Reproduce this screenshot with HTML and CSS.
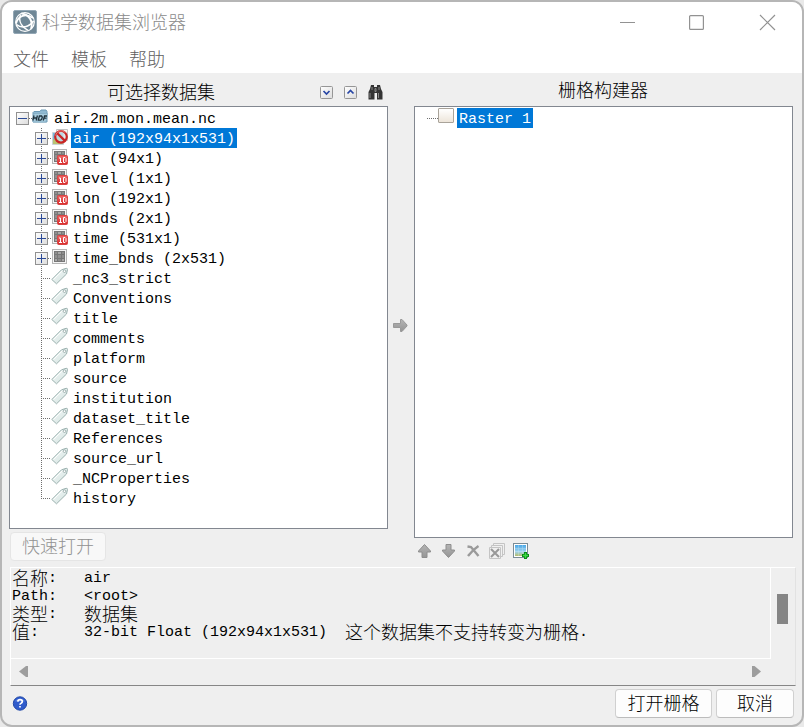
FILE: index.html
```html
<!DOCTYPE html>
<html lang="zh-CN">
<head>
  <meta charset="UTF-8" />
  <title>科学数据集浏览器</title>
  <meta name="viewport" content="width=device-width, initial-scale=1.0"/>
  <link rel="stylesheet" href="styles.css">
</head>
<body>

<!-- shared icons -->
<svg class="sprite" aria-hidden="true">
  <defs>
    <linearGradient id="gBox" x1="0" y1="0" x2="1" y2="1"><stop offset="0" stop-color="#fff"/><stop offset="1" stop-color="#dcdcdc"/></linearGradient>
    <linearGradient id="gTag" x1="0" y1="0" x2="1" y2="1"><stop offset="0" stop-color="#f8fcfb"/><stop offset="1" stop-color="#cfdfdd"/></linearGradient>
    <linearGradient id="gRed" x1="0" y1="0" x2="0" y2="1"><stop offset="0" stop-color="#ee6464"/><stop offset="1" stop-color="#d92b2b"/></linearGradient>
    <linearGradient id="gSky" x1="0" y1="0" x2="0" y2="1"><stop offset="0" stop-color="#4aa8e8"/><stop offset=".6" stop-color="#9fd3ee"/><stop offset="1" stop-color="#b5bd6b"/></linearGradient>
    <linearGradient id="gArrow" x1="0" y1="0" x2="0" y2="1"><stop offset="0" stop-color="#b4b4b4"/><stop offset="1" stop-color="#959595"/></linearGradient>
  </defs>
  <symbol id="plus" viewBox="0 0 13 13">
    <rect x=".5" y=".5" width="12" height="12" fill="url(#gBox)" stroke="#919191"/>
    <path d="M2 6.500h9M6.500 2v9" stroke="#2b4a96"/>
  </symbol>
  <symbol id="minus" viewBox="0 0 13 13">
    <rect x=".5" y=".5" width="12" height="12" fill="url(#gBox)" stroke="#919191"/>
    <path d="M2 6.500h9" stroke="#2b4a96"/>
  </symbol>
  <symbol id="grid" viewBox="0 0 16 16">
    <rect x=".5" y=".5" width="14" height="14" fill="#f4f4f4" stroke="#b5b5b5"/>
    <rect x="2" y="2" width="11" height="11" fill="#777"/>
    <path d="M3 3h2v2H3zM6 3h3v2H6zM10 3h2v2h-2zM3 6h2v3H3zM6 6h3v3H6zM10 6h2v3h-2zM3 10h2v2H3zM6 10h3v2H6zM10 10h2v2h-2z" fill="#8f8f8f"/>
    <path d="M6 3h3v2H6zM3 10h2v2H3zM10 10h2v2h-2z" fill="#a6a6a6"/>
  </symbol>
  <symbol id="grid1d" viewBox="0 0 16 16">
    <use href="#grid" width="16" height="16"/>
    <rect x="5.500" y="6.500" width="10" height="9" rx="1" fill="url(#gRed)" stroke="#d84444"/>
    <path d="M7 9h1.500v4.500M7 13.500h3M11.500 8.500v5h1.500l1-1v-3l-1-1z" fill="none" stroke="#fff"/>
  </symbol>
  <symbol id="blocked" viewBox="0 0 16 16">
    <path d="M4.500.5h11v11h-11z" fill="#f7f7f2" stroke="#c2c2c2"/>
    <path d="M.5 3.500h11v12H.5z" fill="#78b9dc" stroke="#ccd3d5"/>
    <path d="M1 11l4-3 6 7H1z" fill="#b9c471"/>
    <circle cx="9" cy="7.800" r="5.800" fill="#d9e6ea" fill-opacity=".65" stroke="#c92626" stroke-width="2.200"/>
    <path d="M5 4l8 7.800" stroke="#c92626" stroke-width="2.400"/>
    <path d="M3.500 6.500a6 6 0 0 1 10-3" fill="none" stroke="#ee8b84" stroke-width=".8"/>
  </symbol>
  <symbol id="tag" viewBox="0 0 18 18">
    <path d="M.8 12.500L10.500 2.800l4.700-1.500q1.500 0 1.300 1.200L15.500 7 5.500 16.800z" fill="url(#gTag)" stroke="#9bb1af"/>
    <path d="M2.500 12.500l8.800-8.700" stroke="#fff"/>
    <circle cx="13.500" cy="4.200" r="1.300" fill="#fff" stroke="#8fa5a3" stroke-width=".8"/>
  </symbol>
</svg>

<div class="window">
  <header class="titlebar">
    <svg class="logo" viewBox="0 0 24 24">
      <rect x=".5" y=".5" width="23" height="23" rx="1.500" fill="#6f8796" stroke="#93a7b5"/>
      <g fill="none" stroke="#fff">
        <circle cx="12" cy="12" r="9.300" stroke-width="1.200"/>
        <path d="M3 13.500C5 5.500 13 3 20 8" stroke-width="1.900"/>
        <path d="M8.500 3.500C16 4.500 20.500 11 18 19" stroke-width="1.900"/>
        <path d="M7.500 5C5 11 9 18 15.500 20.500" stroke-width="1.300"/>
        <path d="M3.500 14.500c5 4 12.500 3 17-3.500" stroke-width="1.600"/>
      </g>
    </svg>
    <h1>科学数据集浏览器</h1>
    <svg class="controls" viewBox="0 0 156 18">
      <g fill="none" stroke="#929292">
        <path d="M0 9.500h15"/>
        <rect x="69.600" y="2.600" width="13.800" height="13.800" rx="1" stroke-width="1.200"/>
        <path d="M140 2l15 15M155 2l-15 15" stroke-width="1.200"/>
      </g>
    </svg>
  </header>
  <nav class="menubar">
    <span>文件</span>
    <span>模板</span>
    <span>帮助</span>
  </nav>

  <main class="panes">
    <section class="pane">
      <div class="pane-head">
        <h2>可选择数据集</h2>
        <div class="head-tools">
          <svg class="mini" viewBox="0 0 13 13"><rect x=".5" y=".5" width="12" height="12" rx="1" fill="url(#gBox)" stroke="#969696"/><path d="M3.500 5l3 3 3-3" fill="none" stroke="#2846a5" stroke-width="1.700"/></svg>
          <svg class="mini" viewBox="0 0 13 13"><rect x=".5" y=".5" width="12" height="12" rx="1" fill="url(#gBox)" stroke="#969696"/><path d="M3.500 7.500l3-3 3 3" fill="none" stroke="#2846a5" stroke-width="1.700"/></svg>
          <svg class="binoculars" viewBox="0 0 16 16">
            <path d="M3 1h3v2h3V1h3l1 4 1.500 3v7.500H9V9H6.500v6.500H.5V8L2 5z" fill="#343434"/>
            <path d="M2 9v5M10.500 9v5M4 3v3M11 3v3M7 4.500h1v3H7z" fill="none" stroke="#858585"/>
          </svg>
        </div>
      </div>
      <div class="tree tree-left">
        <div class="row root">
          <svg class="box"><use href="#minus"/></svg><i class="dots"></i>
          <svg class="folder" viewBox="0 0 16 16">
            <path d="M1 13V3.500l1-1h6l1-1.500h5l1 1.500v10.500z" fill="#8fb9d2" stroke="#6c9ab6"/>
            <path d="M1 13L2 4.500h13.500L14 13z" fill="#a7ccdf" stroke="#7fa9c0" stroke-width=".7"/>
            <path d="M.8 11.500L2 6.500M4.200 11.500l1.200-5M1.500 9h3M6.300 11.200L7.400 7h2.200l.7 1-.6 2.200-1 1zM11.300 11.500l1.200-4.500H15M12 9.200h2.500" fill="none" stroke="#20323d" stroke-width="1.300"/>
          </svg>
          <span class="label">air.2m.mon.mean.nc</span>
        </div>
        <ul class="children">
          <li class="row"><svg class="box"><use href="#plus"/></svg><i class="dots"></i><svg class="icon"><use href="#blocked"/></svg><span class="label selected">air (192x94x1x531)</span></li>
          <li class="row"><svg class="box"><use href="#plus"/></svg><i class="dots"></i><svg class="icon"><use href="#grid1d"/></svg><span class="label">lat (94x1)</span></li>
          <li class="row"><svg class="box"><use href="#plus"/></svg><i class="dots"></i><svg class="icon"><use href="#grid1d"/></svg><span class="label">level (1x1)</span></li>
          <li class="row"><svg class="box"><use href="#plus"/></svg><i class="dots"></i><svg class="icon"><use href="#grid1d"/></svg><span class="label">lon (192x1)</span></li>
          <li class="row"><svg class="box"><use href="#plus"/></svg><i class="dots"></i><svg class="icon"><use href="#grid1d"/></svg><span class="label">nbnds (2x1)</span></li>
          <li class="row"><svg class="box"><use href="#plus"/></svg><i class="dots"></i><svg class="icon"><use href="#grid1d"/></svg><span class="label">time (531x1)</span></li>
          <li class="row"><svg class="box"><use href="#plus"/></svg><i class="dots"></i><svg class="icon"><use href="#grid"/></svg><span class="label">time_bnds (2x531)</span></li>
          <li class="row attr"><i class="dots"></i><svg class="tag"><use href="#tag"/></svg><span class="label">_nc3_strict</span></li>
          <li class="row attr"><i class="dots"></i><svg class="tag"><use href="#tag"/></svg><span class="label">Conventions</span></li>
          <li class="row attr"><i class="dots"></i><svg class="tag"><use href="#tag"/></svg><span class="label">title</span></li>
          <li class="row attr"><i class="dots"></i><svg class="tag"><use href="#tag"/></svg><span class="label">comments</span></li>
          <li class="row attr"><i class="dots"></i><svg class="tag"><use href="#tag"/></svg><span class="label">platform</span></li>
          <li class="row attr"><i class="dots"></i><svg class="tag"><use href="#tag"/></svg><span class="label">source</span></li>
          <li class="row attr"><i class="dots"></i><svg class="tag"><use href="#tag"/></svg><span class="label">institution</span></li>
          <li class="row attr"><i class="dots"></i><svg class="tag"><use href="#tag"/></svg><span class="label">dataset_title</span></li>
          <li class="row attr"><i class="dots"></i><svg class="tag"><use href="#tag"/></svg><span class="label">References</span></li>
          <li class="row attr"><i class="dots"></i><svg class="tag"><use href="#tag"/></svg><span class="label">source_url</span></li>
          <li class="row attr"><i class="dots"></i><svg class="tag"><use href="#tag"/></svg><span class="label">_NCProperties</span></li>
          <li class="row attr"><i class="dots"></i><svg class="tag"><use href="#tag"/></svg><span class="label">history</span></li>
        </ul>
      </div>
      <button class="btn quick" disabled>快速打开</button>
    </section>

    <div class="transfer">
      <svg viewBox="0 0 15 15"><path d="M.5 5.500h7v-4H9l5 5.500v1L9 13.500H7.500v-4h-7z" fill="url(#gArrow)" stroke="#999"/></svg>
    </div>

    <section class="pane">
      <div class="pane-head builder-head"><h2>栅格构建器</h2></div>
      <div class="tree tree-right">
        <div class="row">
          <i class="dots"></i><span class="blank"></span><span class="label selected">Raster 1</span>
        </div>
      </div>
      <div class="toolbar">
        <svg viewBox="0 0 16 16"><path d="M7.500 1.500L13.500 8v1H10v5.500H5V9H1.500V8z" fill="url(#gArrow)" stroke="#8e8e8e"/></svg>
        <svg viewBox="0 0 16 16"><path d="M7.500 14.500L1.500 8V7H5V1.500h5V7h3.500v1z" fill="url(#gArrow)" stroke="#8e8e8e"/></svg>
        <svg viewBox="0 0 16 16"><path d="M2.500 3.500l3.500.5 7.500 9M13.500 3Q8 6.500 3 13" fill="none" stroke="#9a9a9a" stroke-width="2.400"/></svg>
        <svg viewBox="0 0 16 16">
          <g fill="#f0f0f0" stroke="#c4c4c4"><path d="M4.500.5h11v11h-11z"/><path d="M2.500 2.500h11v11h-11z"/><path d="M.5 4.500h11v11H.5z"/></g>
          <path d="M2 6l8 8M10 6l-8 8" stroke="#989898" stroke-width="2"/>
        </svg>
        <svg viewBox="0 0 16 16">
          <rect x=".5" y=".5" width="14" height="14" fill="#fff" stroke="#7b8c96"/>
          <rect x="2" y="2" width="11" height="11" fill="url(#gSky)"/>
          <path d="M2 5.500h11M2 8.500h11M5.500 2v11M9.500 2v11" stroke="#e0f2f5" stroke-width=".6" opacity=".45"/>
          <path d="M12.500 9v7M9 12.500h7" stroke="#078a18" stroke-width="3"/>
          <path d="M12.500 10v5M10 12.500h5" stroke="#3ddb45" stroke-width="1.300"/>
        </svg>
      </div>
    </section>
  </main>

  <section class="info">
    <div class="info-text">
      <dl>
        <dt><span class="cjk">名称</span>:</dt><dd>air</dd>
        <dt>Path:</dt><dd>&lt;root&gt;</dd>
        <dt><span class="cjk">类型</span>:</dt><dd><span class="cjk">数据集</span></dd>
        <dt><span class="cjk">值</span>:</dt><dd>32-bit Float (192x94x1x531)&nbsp; <span class="cjk">这个数据集不支持转变为栅格</span>.</dd>
      </dl>
    </div>
    <div class="vscroll"><div class="thumb"></div></div>
    <div class="hscroll">
      <svg viewBox="0 0 10 11"><path d="M0 5.500L7 0h2v11H7z" fill="#9d9d9d"/></svg>
      <svg viewBox="0 0 10 11"><path d="M9 5.500L2.500 0H0v11h2.500z" fill="#9d9d9d"/></svg>
    </div>
  </section>

  <footer class="actions">
    <svg class="help" viewBox="0 0 16 16">
      <circle cx="8" cy="7.500" r="6.700" fill="#2f5bcb" stroke="#244aa8"/>
      <path d="M3 5.500a5.300 4 0 0 1 10 0z" fill="#6a8ee5" opacity=".7"/>
      <path d="M5.800 5.700q.2-2 2.200-2 2.300 0 2.300 1.800 0 1.200-1.200 1.700Q8 7.700 8 8.700M8 9.900v1.700" fill="none" stroke="#fff" stroke-width="1.700"/>
    </svg>
    <button class="btn open">打开栅格</button>
    <button class="btn cancel">取消</button>
  </footer>
</div>

</body>
</html>
```
FILE: styles.css
```css
* {
  box-sizing: border-box;
}
body {
  margin: 0;
  background: #e9e9e9;
  font-family: "Liberation Mono", "Noto Sans CJK SC", monospace;
  font-size: 15px;
  color: #000;
}
svg {
  display: block;
  flex: none;
}
.sprite {
  position: absolute;
  width: 0;
  height: 0;
}
.window {
  display: flex;
  flex-direction: column;
  width: 804px;
  height: 727px;
  border: 2px solid #b6b6b6;
  border-radius: 12px;
  background: #efefef;
  overflow: hidden;
}
h1, h2 {
  margin: 0;
  font-family: "Noto Sans CJK SC", sans-serif;
  font-size: 18px;
  font-weight: 300;
}

/* title and menu */
.titlebar {
  display: flex;
  align-items: center;
  height: 40px;
  padding: 0 26px 0 11px;
  background: #fff;
}
.logo {
  width: 24px;
  height: 24px;
}
.titlebar h1 {
  margin-left: 5px;
  padding-bottom: 2px;
  line-height: 38px;
  color: #8a8a8a;
}
.controls {
  width: 156px;
  height: 18px;
  margin-left: auto;
}
.menubar {
  display: flex;
  gap: 22px;
  height: 31px;
  padding-left: 11px;
  background: #fff;
  font-family: "Noto Sans CJK SC", sans-serif;
  font-size: 18px;
  font-weight: 300;
  line-height: 33px;
  color: #606060;
}

/* two panes */
.panes {
  display: flex;
  height: 494px;
  padding: 0 9px 0 7px;
}
.pane {
  width: 379px;
}
.pane-head {
  display: flex;
  align-items: center;
  height: 33px;
  padding: 5px 5px 0 98px;
}
.pane-head h2 {
  padding-bottom: 2px;
  line-height: 26px;
}
.builder-head {
  padding: 1px 0 0 144px;
}
.head-tools {
  display: flex;
  align-items: center;
  gap: 11px;
  margin-left: auto;
}
.mini {
  width: 13px;
  height: 13px;
}
.binoculars {
  width: 16px;
  height: 16px;
  margin-right: -1px;
}
.tree {
  border: 1px solid #828790;
  background: #fff;
  padding-top: 1px;
}
.tree-left {
  height: 423px;
}
.tree-right {
  height: 432px;
}
.children {
  list-style: none;
  margin: 0;
  padding: 0;
}
.row {
  display: flex;
  height: 20px;
}
.children .row {
  padding-left: 25px;
  background: repeating-linear-gradient(to bottom, #6e6e6e 0 1px, transparent 1px 2px) 31px 0 / 1px 20px no-repeat;
}
.children .row.attr {
  padding-left: 31px;
}
.children .row:last-child {
  background-size: 1px 11px;
}
.root {
  padding-left: 6px;
}
.box {
  width: 13px;
  height: 13px;
  margin-top: 4px;
}
.dots {
  flex: none;
  width: 4px;
  height: 1px;
  margin-top: 10px;
  background: repeating-linear-gradient(to right, #6e6e6e 0 1px, transparent 1px 2px);
}
.attr .dots {
  width: 10px;
}
.icon, .folder {
  width: 16px;
  height: 16px;
  margin-top: 1px;
}
.tag {
  width: 18px;
  height: 18px;
  margin: -1px -1px 0 0;
}
.label {
  margin-left: 3px;
  padding: 0 2px;
  line-height: 23px;
  white-space: pre;
}
.root .folder {
  margin-left: -1px;
}
.root .label {
  margin-left: 4px;
}
.label.selected {
  background: #0078d7;
  color: #fff;
}
.tree-right .row {
  padding-left: 12px;
}
.tree-right .dots {
  width: 11px;
}
.blank {
  width: 16px;
  height: 15px;
  border: 1px solid #a9a39a;
  border-radius: 1px;
  background: linear-gradient(#fff, #ede5da);
}
.transfer {
  width: 26px;
  padding: 245px 0 0 5px;
}
.transfer svg {
  width: 15px;
  height: 15px;
}
.toolbar {
  display: flex;
  gap: 8px;
  padding: 5px 0 0 3px;
}
.toolbar svg {
  width: 16px;
  height: 16px;
}

.btn {
  height: 29px;
  padding: 0 0 3px;
  border: 1px solid #d0d0d0;
  border-bottom-color: #bcbcbc;
  border-radius: 4px;
  background: #fdfdfd;
  font-family: "Noto Sans CJK SC", sans-serif;
  font-size: 18px;
  font-weight: 300;
  line-height: 24px;
  color: #000;
}
.quick {
  display: block;
  width: 96px;
  margin: 3px 0 0 1px;
  border-color: #e5e5e5;
  background: #f8f8f8;
  color: #929292;
}

/* dataset details */
.info {
  display: grid;
  grid-template-columns: 760px 1fr;
  grid-template-rows: 91px 1fr;
  width: 786px;
  height: 119px;
  margin-left: 8px;
  border: 1px solid #fff;
  border-right-color: #e2e2e2;
  border-bottom-color: #868686;
}
.info-text {
  border-right: 1px solid #fff;
  border-bottom: 1px solid #fff;
}
.info dl {
  display: grid;
  grid-template-columns: 72px 1fr;
  grid-auto-rows: 18px;
  margin: 1px 0 0 1px;
  line-height: 20px;
}
.info dt, .info dd {
  display: flex;
  margin: 0;
  height: 18px;
  white-space: pre;
}
.cjk {
  font-family: "Noto Sans CJK SC", sans-serif;
  font-size: 18px;
  font-weight: 300;
  line-height: 16px;
}
.vscroll {
  padding: 26px 0 0 6px;
}
.thumb {
  width: 11px;
  height: 30px;
  background: #858585;
}
.hscroll {
  display: flex;
  justify-content: space-between;
  align-items: center;
  width: 760px;
  padding: 0 9px 2px 8px;
}
.hscroll svg {
  width: 10px;
  height: 11px;
}

.actions {
  display: flex;
  gap: 4px;
  padding: 3px 8px 0 10px;
}
.help {
  width: 16px;
  height: 16px;
  margin: 7px auto 0 0;
}
.open {
  width: 97px;
}
.cancel {
  width: 78px;
}
```
